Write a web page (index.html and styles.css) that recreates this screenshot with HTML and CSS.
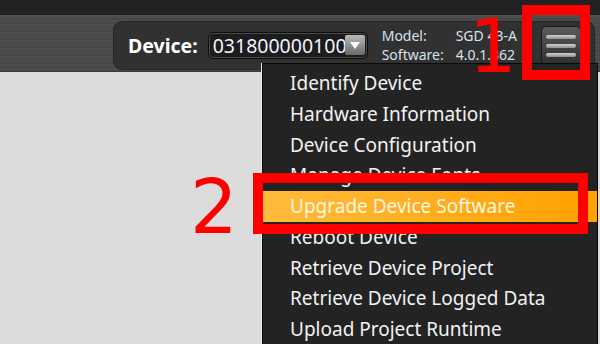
FILE: index.html
```html
<!DOCTYPE html>
<html>
<head>
<meta charset="utf-8">
<link rel="stylesheet" href="styles.css">
</head>
<body>
<div class="app">
  <div class="topbar"></div>
  <div class="toolbar">
    <div class="panel">
      <span class="label">Device:</span>
      <div class="select">
        <span class="sel-text">031800000100</span>
        <span class="sel-arrow"><svg width="12" height="9" viewBox="0 0 12 9"><path d="M1 1 L11 1 L6 8 Z" fill="#fff"/></svg></span>
      </div>
      <div class="info">
        <div class="info-row"><span class="k">Model:</span><span class="v">SGD 43-A</span></div>
        <div class="info-row"><span class="k">Software:</span><span class="v">4.0.1.362</span></div>
      </div>
      <button class="menu-btn"><span class="bar"></span><span class="bar"></span><span class="bar"></span></button>
    </div>
  </div>
  <div class="content"></div>

  <ul class="dropdown">
    <li class="item">Identify Device</li>
    <li class="item">Hardware Information</li>
    <li class="item">Device Configuration</li>
    <li class="item">Manage Device Fonts</li>
    <li class="item active">Upgrade Device Software</li>
    <li class="item">Reboot Device</li>
    <li class="item">Retrieve Device Project</li>
    <li class="item">Retrieve Device Logged Data</li>
    <li class="item">Upload Project Runtime</li>
  </ul>

  <div class="mark mark-1"></div>
  <div class="mark mark-2"></div>
  <span class="num num-1">1</span>
  <span class="num num-2">2</span>
</div>
</body>
</html>
```

FILE: styles.css
```css
html, body {
  margin: 0;
  padding: 0;
}
body {
  width: 600px;
  height: 344px;
  overflow: hidden;
  background: #dcdcdc;
  font-family: "Noto Sans", "Open Sans", sans-serif;
}
.app {
  position: relative;
  width: 600px;
  height: 344px;
  overflow: hidden;
}
.topbar {
  height: 15px;
  background: #222222;
}
.toolbar {
  height: 57px;
  box-sizing: border-box;
  padding: 5px 5px 0 113px;
  background: repeating-linear-gradient(180deg, #4c4c4c 0, #4c4c4c 2px, #474747 2px, #474747 4px);
  border-top: 1px solid #525252;
  border-bottom: 1px solid #3a3a3a;
}
.panel {
  height: 49px;
  box-sizing: border-box;
  display: flex;
  align-items: center;
  padding: 0 13px 0 14px;
  background: #313131;
  border: 1px solid #262626;
  border-radius: 9px;
}
.label {
  color: #ffffff;
  font-weight: 700;
  font-size: 19.5px;
  margin-right: 10px;
}
.select {
  width: 160px;
  height: 27px;
  box-sizing: border-box;
  display: flex;
  align-items: center;
  padding-left: 4px;
  background: #1c1c1c;
  border: 1px solid #0d0d0d;
  box-shadow: inset 0 0 0 1px #4a4a4a;
  border-radius: 5px;
  position: relative;
  margin-right: 14px;
}
.sel-text {
  color: #eef3ff;
  font-size: 19.5px;
  line-height: 27px;
}
.sel-arrow {
  position: absolute;
  right: 2px;
  top: 2px;
  width: 20px;
  height: 20px;
  display: flex;
  align-items: center;
  justify-content: center;
  background: linear-gradient(180deg, #b9b9b9, #6a6a6a);
  border-radius: 2px;
}
.info {
  flex: 1;
  overflow: hidden;
  display: flex;
  flex-direction: column;
  gap: 1px;
}
.info-row {
  display: flex;
  font-size: 14px;
  line-height: 18px;
  color: #d6e2ee;
  white-space: nowrap;
}
.k {
  width: 74px;
}
.menu-btn {
  width: 40px;
  height: 40px;
  margin-left: 10px;
  padding: 0;
  display: flex;
  flex-direction: column;
  align-items: center;
  justify-content: center;
  gap: 5px;
  background: linear-gradient(180deg, #5a5a5a, #2e2e2e);
  border: 1px solid #1a1a1a;
  border-radius: 5px;
}
.bar {
  width: 30px;
  height: 4px;
  border-radius: 2px;
  background: linear-gradient(180deg, #d4d4d4, #8e8e8e);
}
.content {
  height: 272px;
  background: #dcdcdc;
}
.dropdown {
  position: absolute;
  left: 262px;
  top: 63px;
  width: 336px;
  height: 300px;
  margin: 0;
  padding: 4px 0 0 0;
  box-sizing: border-box;
  list-style: none;
  background: #232323;
  border: 1px solid #0a0a0a;
  box-shadow: -1px 0 0 #ececec;
}
.item {
  height: 30.75px;
  line-height: 30.75px;
  padding-left: 27px;
  font-size: 19px;
  color: #f2f2f2;
  white-space: nowrap;
}
.item.active {
  background: linear-gradient(90deg, #ffbb3c, #ffa100);
  color: #fff6e0;
}
.mark {
  position: absolute;
  border: 10px solid #ff0000;
  box-sizing: border-box;
}
.mark-1 {
  left: 522px;
  top: 5px;
  width: 68px;
  height: 75px;
}
.mark-2 {
  left: 253px;
  top: 173px;
  width: 335px;
  height: 61px;
}
.num {
  position: absolute;
  font-family: "DejaVu Sans", sans-serif;
  font-size: 75px;
  line-height: 1;
  color: #ff0000;
}
.num-1 {
  left: 469px;
  top: 9px;
}
.num-2 {
  left: 190px;
  top: 170px;
}
```
